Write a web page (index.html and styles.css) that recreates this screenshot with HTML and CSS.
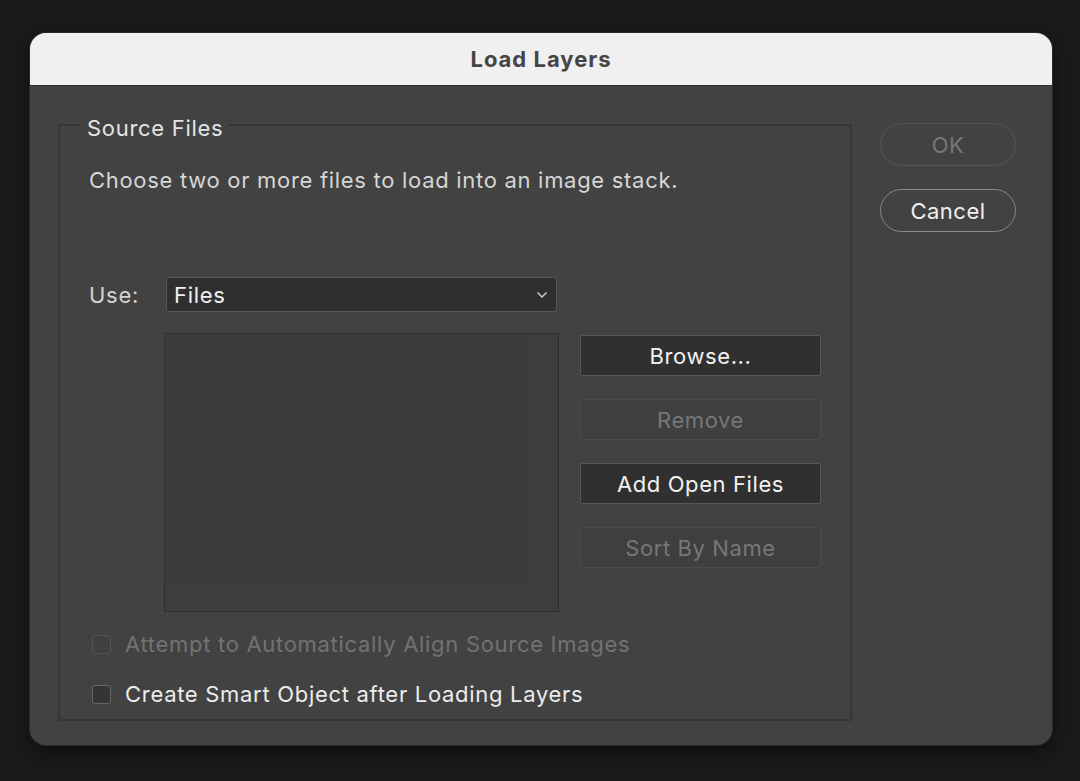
FILE: index.html
```html
<!DOCTYPE html>
<html lang="en">
<head>
    <meta charset="UTF-8">
    <title>Load Layers</title>
    <link rel="stylesheet" href="styles.css">
</head>
<body>
    <div class="dialog">
        <div class="titlebar">Load Layers</div>
        <div class="content">
            <fieldset class="group">
                <legend>Source Files</legend>
                <p class="desc">Choose two or more files to load into an image stack.</p>
                <div class="use-row">
                    <label class="use-label">Use:</label>
                    <div class="select">
                        <span>Files</span>
                        <svg class="chevron" width="12" height="8" viewBox="0 0 12 8"><polyline points="1.5,1.5 6,6 10.5,1.5" fill="none" stroke="#d0d0d0" stroke-width="1.4"/></svg>
                    </div>
                </div>
                <div class="files-row">
                    <div class="listbox">
                        <div class="list-area"></div>
                        <div class="vscroll"></div>
                        <div class="hscroll"></div>
                    </div>
                    <div class="side-buttons">
                        <button class="btn">Browse...</button>
                        <button class="btn disabled">Remove</button>
                        <button class="btn">Add Open Files</button>
                        <button class="btn disabled">Sort By Name</button>
                    </div>
                </div>
                <div class="check disabled">
                    <span class="box"></span>
                    <span>Attempt to Automatically Align Source Images</span>
                </div>
                <div class="check">
                    <span class="box"></span>
                    <span>Create Smart Object after Loading Layers</span>
                </div>
            </fieldset>
            <div class="actions">
                <button class="pill disabled">OK</button>
                <button class="pill">Cancel</button>
            </div>
        </div>
    </div>
</body>
</html>
```

FILE: styles.css
```css
body {
    margin: 0;
    padding: 33px 28px 0 30px;
    background-color: #1a1a1a;
    font-family: Inter, "Noto Sans", sans-serif;
    letter-spacing: 0.7px;
    height: 781px;
    box-sizing: border-box;
    overflow: hidden;
}

.dialog {
    width: 1022px;
    height: 712px;
    background-color: #424242;
    border-radius: 16px;
    overflow: hidden;
    box-shadow: 0 0 0 1px #2a2a2a, 0 6px 20px rgba(0, 0, 0, 0.5);
}

.titlebar {
    height: 52px;
    line-height: 52px;
    background-color: #f0f0f0;
    border-bottom: 1px solid #2c2c2c;
    text-align: center;
    font-size: 22px;
    font-weight: 700;
    letter-spacing: 1px;
    color: #454545;
}

.content {
    display: flex;
    align-items: flex-start;
    padding: 0 0 0 28px;
}

.group {
    margin: 27px 0 0 0;
    padding: 0 0 0 29px;
    width: 794px;
    height: 608px;
    box-sizing: border-box;
    border: 2px solid #363636;
}

.group legend {
    padding: 0 6px;
    margin-left: -8px;
    font-size: 22px;
    color: #e4e4e4;
    line-height: 24px;
    position: relative;
    top: 3px;
}

.desc {
    margin: 30px 0 0 0;
    font-size: 22px;
    color: #d6d6d6;
    line-height: 26px;
}

.use-row {
    display: flex;
    align-items: center;
    margin-top: 84px;
}

.use-label {
    width: 77px;
    font-size: 22px;
    color: #d2d2d2;
}

.select {
    width: 391px;
    height: 35px;
    box-sizing: border-box;
    background-color: #2f2f2f;
    border: 1px solid #555;
    border-radius: 3px;
    display: flex;
    align-items: center;
    justify-content: space-between;
    padding: 0 8px 0 7px;
    font-size: 22px;
    color: #f0f0f0;
}

.files-row {
    display: flex;
    align-items: flex-start;
    margin-top: 21px;
    margin-left: 75px;
}

.listbox {
    width: 395px;
    height: 279px;
    box-sizing: border-box;
    border: 1px solid #2e2e2e;
    background-color: #3b3b3b;
    display: grid;
    grid-template-columns: 1fr 28px;
    grid-template-rows: 1fr 27px;
}

.vscroll {
    background-color: #3d3d3d;
}

.hscroll {
    grid-column: 1 / 3;
    background-color: #3d3d3d;
}

.side-buttons {
    display: flex;
    flex-direction: column;
    gap: 23px;
    margin-left: 21px;
    margin-top: 2px;
}

.btn {
    width: 241px;
    height: 41px;
    background-color: #303030;
    border: 1px solid #575757;
    border-radius: 2px;
    font-family: inherit;
    font-size: 22px;
    letter-spacing: 0.6px;
    color: #f2f2f2;
    padding: 0;
}

.btn.disabled {
    background-color: #3f3f3f;
    border-color: #4c4c4c;
    color: #777;
}

.check {
    display: flex;
    align-items: center;
    gap: 14px;
    margin-left: 3px;
    font-size: 22px;
    color: #ececec;
    height: 26px;
}

.check.disabled {
    margin-top: 19px;
    color: #727272;
}

.check + .check {
    margin-top: 24px;
}

.box {
    width: 17px;
    height: 17px;
    border: 1px solid #666;
    border-radius: 3px;
    background-color: #353535;
}

.check.disabled .box {
    border-color: #555;
    background-color: #404040;
}

.actions {
    display: flex;
    flex-direction: column;
    gap: 23px;
    margin: 37px 0 0 28px;
}

.pill {
    width: 136px;
    height: 43px;
    border-radius: 22px;
    background-color: transparent;
    border: 1px solid #8a8a8a;
    font-family: inherit;
    font-size: 22px;
    letter-spacing: 0.5px;
    color: #f0f0f0;
    padding: 0;
}

.pill.disabled {
    border-color: #555;
    color: #777;
}
```
